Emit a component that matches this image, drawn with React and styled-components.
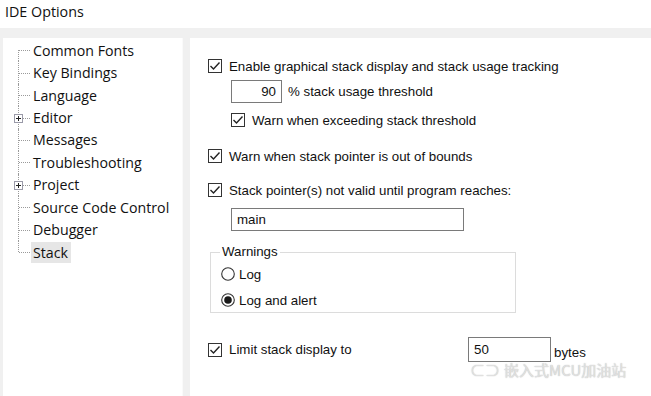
import styled, { createGlobalStyle } from 'styled-components';

const GlobalStyle = createGlobalStyle`
  html, body {
    margin: 0;
    padding: 0;
    background: #ffffff;
  }
  * {
    box-sizing: border-box;
  }
`;

const Window = styled.div`
  width: 651px;
  height: 396px;
  display: flex;
  flex-direction: column;
  background: #ffffff;
  overflow: hidden;
  position: relative;
`;

const TitleBar = styled.div`
  height: 28px;
  padding: 2px 0 0 5px;
  font-family: 'Open Sans', 'Noto Sans', sans-serif;
  font-size: 14.3px;
  color: #111;
  line-height: 20px;
`;

const Body = styled.div`
  flex: 1;
  display: flex;
  background: #f0f0f0;
  padding: 10px 0 0 3px;
  gap: 7px;
`;

const TreePanel = styled.div`
  width: 180px;
  background: #ffffff;
  border-right: 1px solid #fafafa;
  padding-top: 1px;
  font-family: 'Open Sans', 'Noto Sans', sans-serif;
  font-size: 14.2px;
  color: #111;
`;

const TreeRow = styled.div`
  height: 22.45px;
  display: flex;
  align-items: center;
`;

const Connector = styled.div`
  position: relative;
  width: 28px;
  align-self: stretch;

  &::before {
    content: '';
    position: absolute;
    left: 15px;
    top: ${(p) => (p.$first ? '50%' : '0')};
    bottom: ${(p) => (p.$last ? '50%' : '0')};
    border-left: 1px dotted #9a9a9a;
  }

  &::after {
    content: '';
    position: absolute;
    left: 16px;
    width: 11px;
    top: 50%;
    border-top: 1px dotted #9a9a9a;
  }
`;

const PlusBox = styled.span`
  position: absolute;
  left: 11px;
  top: 50%;
  margin-top: -4px;
  width: 9px;
  height: 9px;
  border: 1px solid #9a9aa8;
  background: #fff;
  z-index: 1;

  &::before {
    content: '';
    position: absolute;
    left: 1px;
    right: 1px;
    top: 3px;
    height: 1px;
    background: #222;
  }
  &::after {
    content: '';
    position: absolute;
    top: 1px;
    bottom: 1px;
    left: 3px;
    width: 1px;
    background: #222;
  }
`;

const TreeLabel = styled.span`
  padding: 0 3px 0 2px;
  line-height: 21px;
  background: ${(p) => (p.$selected ? '#e6e6e6' : 'transparent')};
`;

const OptionsPanel = styled.div`
  flex: 1;
  background: #ffffff;
  padding: 21px 0 0 18px;
  display: flex;
  flex-direction: column;
  font-family: 'Liberation Sans', Arial, sans-serif;
  font-size: 13.3px;
  color: #111;
`;

const Row = styled.div`
  display: flex;
  align-items: center;
  gap: 7px;
  height: ${(p) => p.$h || 14}px;
  margin-top: ${(p) => p.$mt || 0}px;
  margin-left: ${(p) => p.$indent || 0}px;
`;

const TextBox = styled.div`
  width: ${(p) => p.$w}px;
  height: ${(p) => p.$h || 23}px;
  border: 1px solid #7a7a7a;
  background: #fff;
  display: flex;
  align-items: center;
  justify-content: ${(p) => (p.$right ? 'flex-end' : 'flex-start')};
  padding: 0 5px;
  font-size: 13.3px;
`;

const GroupBox = styled.fieldset`
  margin: 14px 0 0 2px;
  width: 306px;
  height: 68px;
  border: 1px solid #dcdcdc;
  padding: 0 0 0 10px;
  display: flex;
  flex-direction: column;

  legend {
    padding: 0 2px;
    margin-left: -1px;
    font-size: 13.3px;
    line-height: 14px;
  }
`;

const LimitRow = styled.div`
  display: flex;
  align-items: center;
  margin-top: 24px;
  height: 25px;
`;

const LimitLabel = styled.label`
  width: 260px;
  display: flex;
  align-items: center;
  gap: 7px;
`;

const Unit = styled.span`
  margin: 6px 0 0 3px;
`;

const Watermark = styled.div`
  position: absolute;
  left: 470px;
  top: 359px;
  display: flex;
  align-items: center;
  gap: 4px;
  font-family: 'Noto Sans CJK SC', sans-serif;
  font-size: 15px;
  color: rgba(235, 235, 235, 0.8);
  text-shadow: 0 0 1px rgba(110, 110, 110, 0.6);
  pointer-events: none;
`;

const CheckBox = () => (
  <svg width="14" height="14" viewBox="0 0 14 14">
    <rect x="0.5" y="0.5" width="13" height="13" fill="#fff" stroke="#333" />
    <polyline points="2.5,7 5.5,10 11.5,3.5" fill="none" stroke="#222" strokeWidth="1.4" />
  </svg>
);

const Radio = ({ checked }) => (
  <svg width="14" height="14" viewBox="0 0 14 14">
    <circle cx="7" cy="7" r="6.3" fill="#fff" stroke="#333" strokeWidth="1.1" />
    {checked && <circle cx="7" cy="7" r="3.8" fill="#1a1a1a" />}
  </svg>
);

const treeItems = [
  { label: 'Common Fonts' },
  { label: 'Key Bindings' },
  { label: 'Language' },
  { label: 'Editor', expandable: true },
  { label: 'Messages' },
  { label: 'Troubleshooting' },
  { label: 'Project', expandable: true },
  { label: 'Source Code Control' },
  { label: 'Debugger' },
  { label: 'Stack', selected: true },
];

const App = () => {
  return (
    <Window>
      <GlobalStyle />
      <TitleBar>IDE Options</TitleBar>
      <Body>
        <TreePanel>
          {treeItems.map((item, i) => (
            <TreeRow key={item.label}>
              <Connector $first={i === 0} $last={i === treeItems.length - 1}>
                {item.expandable && <PlusBox />}
              </Connector>
              <TreeLabel $selected={item.selected}>{item.label}</TreeLabel>
            </TreeRow>
          ))}
        </TreePanel>

        <OptionsPanel>
          <Row>
            <CheckBox />
            <span>Enable graphical stack display and stack usage tracking</span>
          </Row>
          <Row $h={23} $mt={7} $indent={23} style={{ gap: 6 }}>
            <TextBox $w={51} $right>90</TextBox>
            <span>% stack usage threshold</span>
          </Row>
          <Row $mt={10} $indent={23}>
            <CheckBox />
            <span>Warn when exceeding stack threshold</span>
          </Row>
          <Row $mt={22}>
            <CheckBox />
            <span>Warn when stack pointer is out of bounds</span>
          </Row>
          <Row $mt={20}>
            <CheckBox />
            <span>Stack pointer(s) not valid until program reaches:</span>
          </Row>
          <Row $h={23} $mt={11} $indent={23}>
            <TextBox $w={233}>main</TextBox>
          </Row>

          <GroupBox>
            <legend>Warnings</legend>
            <Row $mt={8} style={{ gap: 4 }}>
              <Radio />
              <span>Log</span>
            </Row>
            <Row $mt={12} style={{ gap: 4 }}>
              <Radio checked />
              <span>Log and alert</span>
            </Row>
          </GroupBox>

          <LimitRow>
            <LimitLabel>
              <CheckBox />
              <span>Limit stack display to</span>
            </LimitLabel>
            <TextBox $w={83} $h={25}>50</TextBox>
            <Unit>bytes</Unit>
          </LimitRow>
        </OptionsPanel>
      </Body>
      <Watermark>
        <span>⊂⊃</span>
        <span>嵌入式MCU加油站</span>
      </Watermark>
    </Window>
  );
};

export default App;
